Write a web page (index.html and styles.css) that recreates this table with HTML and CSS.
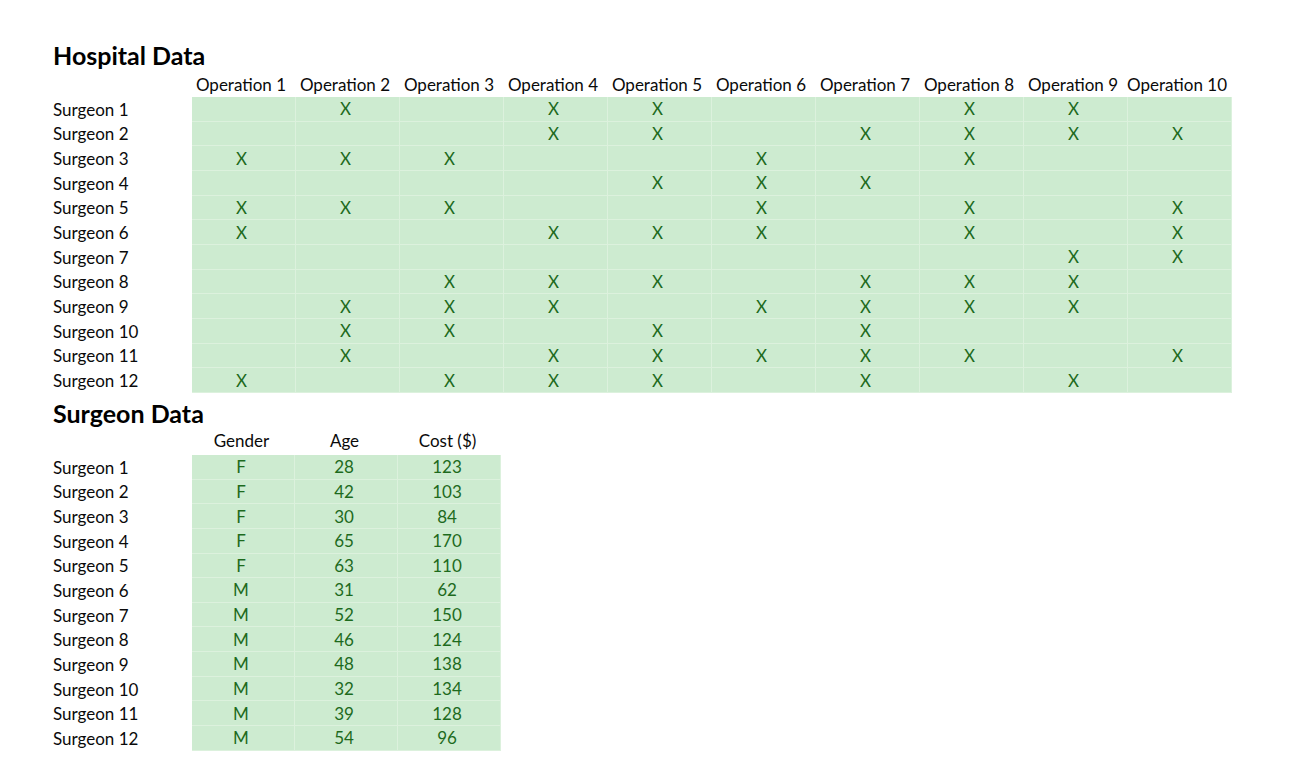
FILE: index.html
```html
<!DOCTYPE html>
<html>
<head>
<meta charset="utf-8">
<link rel="stylesheet" href="styles.css">
</head>
<body>
<div class="sheet">
  <h2 class="title">Hospital Data</h2>
  <div class="grid ops">
    <div class="hd lbl"></div>
    <div class="hd">Operation 1</div><div class="hd">Operation 2</div><div class="hd">Operation 3</div><div class="hd">Operation 4</div><div class="hd">Operation 5</div><div class="hd">Operation 6</div><div class="hd">Operation 7</div><div class="hd">Operation 8</div><div class="hd">Operation 9</div><div class="hd last">Operation 10</div>

    <div class="lbl">Surgeon 1</div>
    <div class="c"></div><div class="c">X</div><div class="c"></div><div class="c">X</div><div class="c">X</div><div class="c"></div><div class="c"></div><div class="c">X</div><div class="c">X</div><div class="c"></div>

    <div class="lbl">Surgeon 2</div>
    <div class="c"></div><div class="c"></div><div class="c"></div><div class="c">X</div><div class="c">X</div><div class="c"></div><div class="c">X</div><div class="c">X</div><div class="c">X</div><div class="c">X</div>

    <div class="lbl">Surgeon 3</div>
    <div class="c">X</div><div class="c">X</div><div class="c">X</div><div class="c"></div><div class="c"></div><div class="c">X</div><div class="c"></div><div class="c">X</div><div class="c"></div><div class="c"></div>

    <div class="lbl">Surgeon 4</div>
    <div class="c"></div><div class="c"></div><div class="c"></div><div class="c"></div><div class="c">X</div><div class="c">X</div><div class="c">X</div><div class="c"></div><div class="c"></div><div class="c"></div>

    <div class="lbl">Surgeon 5</div>
    <div class="c">X</div><div class="c">X</div><div class="c">X</div><div class="c"></div><div class="c"></div><div class="c">X</div><div class="c"></div><div class="c">X</div><div class="c"></div><div class="c">X</div>

    <div class="lbl">Surgeon 6</div>
    <div class="c">X</div><div class="c"></div><div class="c"></div><div class="c">X</div><div class="c">X</div><div class="c">X</div><div class="c"></div><div class="c">X</div><div class="c"></div><div class="c">X</div>

    <div class="lbl">Surgeon 7</div>
    <div class="c"></div><div class="c"></div><div class="c"></div><div class="c"></div><div class="c"></div><div class="c"></div><div class="c"></div><div class="c"></div><div class="c">X</div><div class="c">X</div>

    <div class="lbl">Surgeon 8</div>
    <div class="c"></div><div class="c"></div><div class="c">X</div><div class="c">X</div><div class="c">X</div><div class="c"></div><div class="c">X</div><div class="c">X</div><div class="c">X</div><div class="c"></div>

    <div class="lbl">Surgeon 9</div>
    <div class="c"></div><div class="c">X</div><div class="c">X</div><div class="c">X</div><div class="c"></div><div class="c">X</div><div class="c">X</div><div class="c">X</div><div class="c">X</div><div class="c"></div>

    <div class="lbl">Surgeon 10</div>
    <div class="c"></div><div class="c">X</div><div class="c">X</div><div class="c"></div><div class="c">X</div><div class="c"></div><div class="c">X</div><div class="c"></div><div class="c"></div><div class="c"></div>

    <div class="lbl">Surgeon 11</div>
    <div class="c"></div><div class="c">X</div><div class="c"></div><div class="c">X</div><div class="c">X</div><div class="c">X</div><div class="c">X</div><div class="c">X</div><div class="c"></div><div class="c">X</div>

    <div class="lbl">Surgeon 12</div>
    <div class="c">X</div><div class="c"></div><div class="c">X</div><div class="c">X</div><div class="c">X</div><div class="c"></div><div class="c">X</div><div class="c"></div><div class="c">X</div><div class="c"></div>
  </div>

  <h2 class="title title2">Surgeon Data</h2>
  <div class="grid surg">
    <div class="hd2 lbl"></div>
    <div class="hd2">Gender</div><div class="hd2">Age</div><div class="hd2">Cost ($)</div>

    <div class="lbl">Surgeon 1</div><div class="c">F</div><div class="c">28</div><div class="c">123</div>
    <div class="lbl">Surgeon 2</div><div class="c">F</div><div class="c">42</div><div class="c">103</div>
    <div class="lbl">Surgeon 3</div><div class="c">F</div><div class="c">30</div><div class="c">84</div>
    <div class="lbl">Surgeon 4</div><div class="c">F</div><div class="c">65</div><div class="c">170</div>
    <div class="lbl">Surgeon 5</div><div class="c">F</div><div class="c">63</div><div class="c">110</div>
    <div class="lbl">Surgeon 6</div><div class="c">M</div><div class="c">31</div><div class="c">62</div>
    <div class="lbl">Surgeon 7</div><div class="c">M</div><div class="c">52</div><div class="c">150</div>
    <div class="lbl">Surgeon 8</div><div class="c">M</div><div class="c">46</div><div class="c">124</div>
    <div class="lbl">Surgeon 9</div><div class="c">M</div><div class="c">48</div><div class="c">138</div>
    <div class="lbl">Surgeon 10</div><div class="c">M</div><div class="c">32</div><div class="c">134</div>
    <div class="lbl">Surgeon 11</div><div class="c">M</div><div class="c">39</div><div class="c">128</div>
    <div class="lbl">Surgeon 12</div><div class="c">M</div><div class="c">54</div><div class="c">96</div>
  </div>
</div>
</body>
</html>
```

FILE: styles.css
```css
html, body {
  margin: 0;
  padding: 0;
  background: #ffffff;
}

body {
  font-family: Lato, "Open Sans", "Liberation Sans", sans-serif;
  color: #0a0a0a;
}

.sheet {
  padding: 43px 0 0 53px;
}

.title {
  margin: 0;
  height: 24px;
  line-height: 24px;
  font-size: 25px;
  font-weight: 700;
  color: #000000;
}

.title2 {
  margin-top: 8px;
}

.grid {
  display: grid;
  grid-auto-rows: 24.67px;
  font-size: 17px;
}

.ops {
  grid-template-columns: 139px repeat(10, 104px);
  grid-template-rows: 30px;
}

.surg {
  margin-top: 5px;
  grid-template-columns: 139px repeat(3, 103px);
  grid-template-rows: 25px;
}

.lbl {
  display: flex;
  align-items: center;
  white-space: nowrap;
}

.hd {
  display: flex;
  align-items: flex-end;
  justify-content: center;
  padding-bottom: 2px;
  padding-right: 6px;
  white-space: nowrap;
}

.hd.lbl, .hd2.lbl {
  justify-content: flex-start;
}

.hd2 {
  display: flex;
  align-items: flex-start;
  justify-content: center;
  padding-right: 4px;
  white-space: nowrap;
}

.c {
  display: flex;
  align-items: center;
  justify-content: center;
  padding-right: 4px;
  background: #cdebd0;
  color: #1d6a1d;
  border-right: 1px solid #dcf1dd;
  border-bottom: 1px solid #dcf1dd;
  box-sizing: border-box;
}
```
